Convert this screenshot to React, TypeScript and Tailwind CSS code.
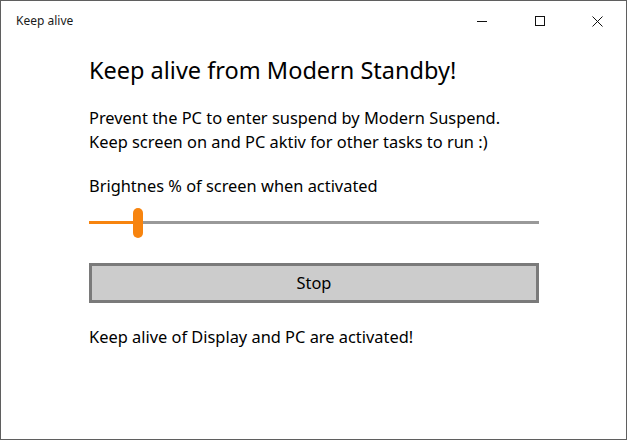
import React from "react";

export default function App() {
  return (
    <div className="w-[627px] h-[441px] bg-white" style={{ fontFamily: '"Noto Sans", "Open Sans", sans-serif' }}>
      <div className="w-[627px] h-[440px] border border-[#5f5f5f] bg-white flex flex-col text-black">
        {/* title bar */}
        <div className="h-[40px] flex items-center justify-between">
          <div className="pl-[15px] text-[12px] text-[#1a1a1a] pb-[1px]">Keep alive</div>
          <div className="flex h-full">
            <div className="w-[57px] h-full flex items-center justify-center pr-[3px]">
              <svg width="10" height="10" viewBox="0 0 10 10"><path d="M0 5.5h10" stroke="#111" strokeWidth="1" /></svg>
            </div>
            <div className="w-[57px] h-full flex items-center justify-center pr-[1px]">
              <svg width="10" height="10" viewBox="0 0 10 10"><rect x="0.5" y="0.5" width="9" height="9" fill="none" stroke="#111" strokeWidth="1" /></svg>
            </div>
            <div className="w-[57px] h-full flex items-center justify-center">
              <svg width="11" height="11" viewBox="0 0 11 11"><path d="M0.5 0.5L10.5 10.5M10.5 0.5L0.5 10.5" stroke="#111" strokeWidth="1" /></svg>
            </div>
          </div>
        </div>
        {/* content */}
        <div className="pl-[88px] w-[538px] flex flex-col">
          <div className="text-[23.5px] leading-[32px] mt-[13px]">Keep alive from Modern Standby!</div>
          <div className="text-[16.4px] leading-[24px] mt-[20px]">
            Prevent the PC to enter suspend by Modern Suspend.
            <br />
            Keep screen on and PC aktiv for other tasks to run :)
          </div>
          <div className="text-[16.4px] leading-[24px] mt-[20px]">Brightnes % of screen when activated</div>
          <div className="relative h-[30px] mt-[10px] w-[450px]">
            <div className="absolute left-0 right-0 top-[13px] h-[3px] bg-[#999999]" />
            <div className="absolute left-0 w-[46px] top-[13px] h-[3px] bg-[#f7840f]" />
            <div className="absolute left-[44px] top-0 w-[10px] h-[30px] rounded-[5px] bg-[#f7840f]" />
          </div>
          <div className="mt-[25px] w-[450px] h-[40px] border-[3px] border-[#7a7a7a] bg-[#cccccc] flex items-center justify-center text-[16.4px]">
            Stop
          </div>
          <div className="text-[16.4px] leading-[24px] mt-[22px]">Keep alive of Display and PC are activated!</div>
        </div>
      </div>
    </div>
  );
}
